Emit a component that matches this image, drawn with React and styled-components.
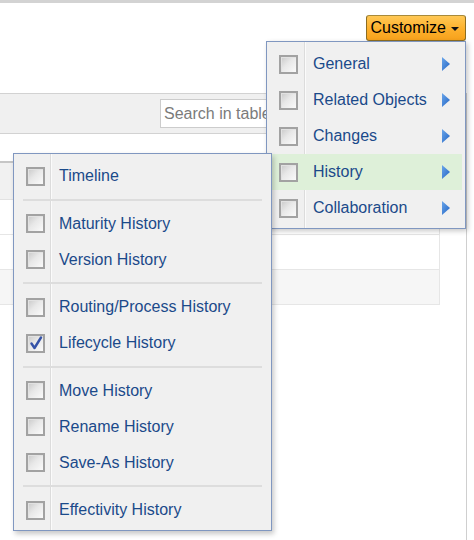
import React from "react";
import styled, { createGlobalStyle } from "styled-components";

const GlobalStyle = createGlobalStyle`
  body {
    margin: 0;
    background: #ffffff;
    font-family: "Liberation Sans", Arial, sans-serif;
  }
`;

const menuBlue = "#1b4a8a";

const TopStripe = styled.div`
  height: 3px;
  background: #d3d3d3;
`;

const Header = styled.div`
  height: 90px;
  display: flex;
  justify-content: flex-end;
  align-items: flex-start;
  padding: 12px 8px 0 0;
  box-sizing: border-box;
`;

const CustomizeWrap = styled.div`
  position: relative;
  z-index: 2;
`;

const CustomizeButton = styled.button`
  display: flex;
  align-items: center;
  gap: 5px;
  height: 26px;
  padding: 0 6px 0 3px;
  border: 1px solid #8c6d22;
  border-top-color: #a88a3a;
  border-radius: 3px;
  background: linear-gradient(#ffc855, #fdb02c 55%, #f7a21c);
  font-family: "Liberation Sans", Arial, sans-serif;
  font-size: 16px;
  color: #000;
  cursor: pointer;
`;

const Caret = styled.span`
  width: 0;
  height: 0;
  border-left: 4px solid transparent;
  border-right: 4px solid transparent;
  border-top: 4px solid #111;
  margin-top: 2px;
`;

const Dropdown = styled.div`
  position: absolute;
  top: 100%;
  right: 0;
  width: 200px;
  box-sizing: border-box;
  padding: 4px 3px 2px;
  border: 1px solid #8097c0;
  background:
    linear-gradient(
      to right,
      transparent 37px,
      #dcdcdc 37px,
      #dcdcdc 38px,
      #fbfbfb 38px,
      #fbfbfb 39px,
      transparent 39px
    ),
    #f0f0f0;
  box-shadow: 2px 2px 5px rgba(0, 0, 0, 0.22);
`;

const MenuRow = styled.div`
  display: flex;
  align-items: center;
  height: 36px;
  padding: 0 12px 0 9px;
  background: ${(p) => (p.$active ? "#def0d9" : "transparent")};
`;

const Label = styled.span`
  flex: 1;
  margin-left: ${(p) => p.$gap}px;
  font-size: 16px;
  color: ${menuBlue};
  white-space: nowrap;
`;

const Box = styled.span`
  position: relative;
  flex: none;
  width: 19px;
  height: 19px;
  box-sizing: border-box;
  border: 2px solid #a2a2a2;
  background: linear-gradient(135deg, #c9c9c9, #e8e8e8 45%, #fafafa);
  box-shadow: inset 1px 1px 0 #e2e2e2;
  svg {
    position: absolute;
    left: 1px;
    top: 0px;
  }
`;

const Submenu = styled.div`
  position: absolute;
  left: -254px;
  top: 111px;
  width: 259px;
  box-sizing: border-box;
  padding: 4px 3px 2px;
  border: 1px solid #8097c0;
  background:
    linear-gradient(
      to right,
      transparent 36px,
      #dcdcdc 36px,
      #dcdcdc 37px,
      #fbfbfb 37px,
      #fbfbfb 38px,
      transparent 38px
    ),
    #f0f0f0;
  box-shadow: 2px 3px 5px rgba(0, 0, 0, 0.22);
`;

const SubRow = styled.div`
  display: flex;
  align-items: center;
  height: 36px;
  padding: 0 9px;
`;

const Separator = styled.div`
  height: 11.5px;
  display: flex;
  align-items: center;
  padding: 0 6px;
  &::after {
    content: "";
    flex: 1;
    height: 2px;
    background: #dddddd;
  }
`;

const Panel = styled.div`
  width: 467px;
  min-height: calc(100vh - 93px);
  box-sizing: border-box;
  border-right: 1px solid #cfcfcf;
`;

const Toolbar = styled.div`
  height: 41px;
  box-sizing: border-box;
  display: flex;
  align-items: center;
  justify-content: flex-end;
  padding-right: 66px;
  background: #f0f0f0;
  border-top: 1px solid #d2d2d2;
  border-bottom: 1px solid #d2d2d2;
`;

const SearchInput = styled.input`
  width: 240px;
  height: 29px;
  box-sizing: border-box;
  padding: 0 3px;
  border: 1px solid #cccccc;
  background: #fff;
  font-family: "Liberation Sans", Arial, sans-serif;
  font-size: 16px;
  &::placeholder {
    color: #7b7b7b;
  }
`;

const Table = styled.div`
  width: 440px;
  margin-top: 27px;
`;

const HeadRow = styled.div`
  height: 39px;
  box-sizing: border-box;
  border-top: 2px solid #c6c6c6;
  border-bottom: 1px solid #e2e2e2;
  background: #f1f1f1;
`;

const BodyRow = styled.div`
  height: 35px;
  box-sizing: border-box;
  border-bottom: 1px solid #e6e6e6;
  border-right: 1px solid #e6e6e6;
  background: ${(p) => (p.$shade ? "#f6f6f6" : "#ffffff")};
`;

function Arrow() {
  return (
    <svg width="8" height="14" viewBox="0 0 8 14">
      <defs>
        <linearGradient id="arrowBlue" x1="0" y1="0" x2="1" y2="1">
          <stop offset="0" stopColor="#6aa6ea" />
          <stop offset="1" stopColor="#2264c4" />
        </linearGradient>
      </defs>
      <polygon points="0,0 8,7 0,14" fill="url(#arrowBlue)" />
    </svg>
  );
}

function Checkbox({ checked }) {
  return (
    <Box>
      {checked && (
        <svg width="14" height="14" viewBox="0 0 14 14">
          <path
            d="M2.5 7.5 L5.5 12 L12 1.5"
            fill="none"
            stroke="#3553a8"
            strokeWidth="2.4"
            strokeLinecap="round"
            strokeLinejoin="round"
          />
        </svg>
      )}
    </Box>
  );
}

const mainItems = [
  "General",
  "Related Objects",
  "Changes",
  "History",
  "Collaboration",
];

const historyGroups = [
  [{ label: "Timeline" }],
  [{ label: "Maturity History" }, { label: "Version History" }],
  [
    { label: "Routing/Process History" },
    { label: "Lifecycle History", checked: true },
  ],
  [{ label: "Move History" }, { label: "Rename History" }, { label: "Save-As History" }],
  [{ label: "Effectivity History" }],
];

export default function App() {
  return (
    <>
      <GlobalStyle />
      <TopStripe />
      <Header>
        <CustomizeWrap>
          <CustomizeButton>
            Customize
            <Caret />
          </CustomizeButton>
          <Dropdown>
            {mainItems.map((item) => (
              <MenuRow key={item} $active={item === "History"}>
                <Checkbox />
                <Label $gap={15}>{item}</Label>
                <Arrow />
              </MenuRow>
            ))}
            <Submenu>
              {historyGroups.map((group, i) => (
                <React.Fragment key={i}>
                  {i > 0 && <Separator />}
                  {group.map((entry) => (
                    <SubRow key={entry.label}>
                      <Checkbox checked={entry.checked} />
                      <Label $gap={14}>{entry.label}</Label>
                    </SubRow>
                  ))}
                </React.Fragment>
              ))}
            </Submenu>
          </Dropdown>
        </CustomizeWrap>
      </Header>
      <Panel>
        <Toolbar>
          <SearchInput placeholder="Search in table" />
        </Toolbar>
        <Table>
          <HeadRow />
          <BodyRow />
          <BodyRow />
          <BodyRow $shade />
        </Table>
      </Panel>
    </>
  );
}
